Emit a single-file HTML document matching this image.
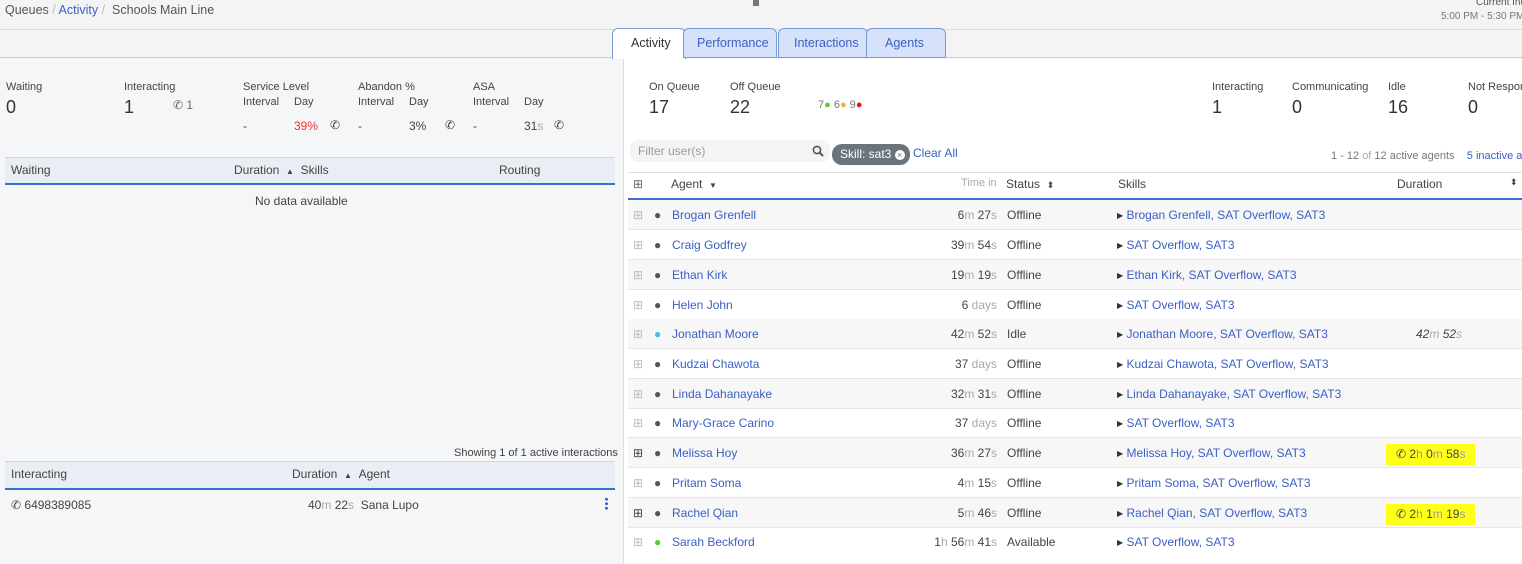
<!DOCTYPE html>
<html><head><meta charset="utf-8"><style>
*{margin:0;padding:0;box-sizing:border-box}
body{width:1522px;height:564px;overflow:hidden;font-family:"Liberation Sans",sans-serif;font-size:12px;color:#444;background:#f5f6f8;position:relative}
.a{position:absolute;white-space:nowrap}
.blue{color:#3b5fc4}
.g{color:#aaa}
.lbl{font-size:11px;color:#444}
.big{font-size:18px;color:#333}
.row{position:absolute;left:628px;width:894px;height:30px;border-bottom:1px solid #e6e6e6}
.row>span{position:absolute;top:8px;white-space:nowrap}
.tri{color:#333;font-size:8px;vertical-align:1px}
</style></head><body>
<div class="a" style="left:0;top:0;width:1522px;height:30px;background:#f4f4f4"></div>
<div class="a" style="left:5px;top:3px;font-size:12.5px;color:#555">Queues <span style="color:#bbb">/</span> <span class="blue">Activity</span> <span style="color:#bbb">/</span> &nbsp;Schools Main Line</div>
<div class="a" style="left:753px;top:0;width:6px;height:6px;background:#777"></div>
<div class="a" style="left:1476px;top:-3px;font-size:10px;color:#555">Current Interval</div>
<div class="a" style="left:1441px;top:11px;font-size:10px;color:#777">5:00 PM - 5:30 PM</div>
<div class="a" style="left:0;top:29px;width:1522px;height:29px;background:#f4f4f4;border-top:1px solid #ddd;border-bottom:1px solid #ccd"></div>
<div class="a" style="left:612px;top:28px;width:74px;height:31px;background:#fff;border:1px solid #7a9ad8;border-bottom:none;border-radius:6px 6px 0 0"></div>
<div class="a" style="left:683px;top:28px;width:94px;height:30px;background:#d6e2fa;border:1px solid #7a9ad8;border-radius:6px 6px 0 0"></div>
<div class="a" style="left:778px;top:28px;width:90px;height:30px;background:#d6e2fa;border:1px solid #7a9ad8;border-radius:6px 6px 0 0"></div>
<div class="a" style="left:866px;top:28px;width:80px;height:30px;background:#d6e2fa;border:1px solid #7a9ad8;border-radius:6px 6px 0 0"></div>
<div class="a" style="left:631px;top:36px;font-size:12.5px;color:#333">Activity</div>
<div class="a blue" style="left:697px;top:36px;font-size:12.5px">Performance</div>
<div class="a blue" style="left:794px;top:36px;font-size:12.5px">Interactions</div>
<div class="a blue" style="left:885px;top:36px;font-size:12.5px">Agents</div>

<div class="a lbl" style="left:6px;top:81px">Waiting</div><div class="a big" style="left:6px;top:97px">0</div>
<div class="a lbl" style="left:124px;top:81px">Interacting</div><div class="a big" style="left:124px;top:97px">1</div>
<div class="a" style="left:173px;top:98px;color:#666">&#x2706; 1</div>
<div class="a lbl" style="left:243px;top:81px">Service Level</div>
<div class="a lbl" style="left:243px;top:96px">Interval</div><div class="a lbl" style="left:294px;top:96px">Day</div>
<div class="a" style="left:243px;top:119px">-</div><div class="a" style="left:294px;top:119px;color:#e33">39%</div><div class="a" style="left:330px;top:118px">&#x2706;</div>
<div class="a lbl" style="left:358px;top:81px">Abandon %</div>
<div class="a lbl" style="left:358px;top:96px">Interval</div><div class="a lbl" style="left:409px;top:96px">Day</div>
<div class="a" style="left:358px;top:119px">-</div><div class="a" style="left:409px;top:119px">3%</div><div class="a" style="left:445px;top:118px">&#x2706;</div>
<div class="a lbl" style="left:473px;top:81px">ASA</div>
<div class="a lbl" style="left:473px;top:96px">Interval</div><div class="a lbl" style="left:524px;top:96px">Day</div>
<div class="a" style="left:473px;top:119px">-</div><div class="a" style="left:524px;top:119px">31<span class="g">s</span></div><div class="a" style="left:554px;top:118px">&#x2706;</div>

<div class="a" style="left:5px;top:157px;width:610px;height:28px;background:#e9edf4;border-top:1px solid #d0d6df;border-bottom:2px solid #3a6fd0"></div>
<div class="a" style="left:11px;top:163px">Waiting</div>
<div class="a" style="left:234px;top:163px">Duration &nbsp;<span style="font-size:8px">&#9650;</span> &nbsp;Skills</div>
<div class="a" style="left:499px;top:163px">Routing</div>
<div class="a" style="left:255px;top:194px">No data available</div>

<div class="a" style="left:454px;top:447px;font-size:11px">Showing 1 of 1 active interactions</div>
<div class="a" style="left:5px;top:461px;width:610px;height:29px;background:#e9edf4;border-top:1px solid #d0d6df;border-bottom:2px solid #3a6fd0"></div>
<div class="a" style="left:11px;top:467px">Interacting</div>
<div class="a" style="left:292px;top:467px">Duration &nbsp;<span style="font-size:8px">&#9650;</span> &nbsp;Agent</div>
<div class="a" style="left:11px;top:498px">&#x2706; 6498389085</div>
<div class="a" style="left:308px;top:498px">40<span class="g">m</span> 22<span class="g">s</span> &nbsp;Sana Lupo</div>
<div class="a" style="left:605px;top:497px;width:3px;height:13px;background:radial-gradient(circle,#3b5fc4 1.4px,transparent 1.6px) 0 0/3px 4.5px"></div>

<div class="a" style="left:623px;top:59px;width:899px;height:505px;background:#fff;border-left:1px solid #dde"></div>
<div class="a lbl" style="left:649px;top:81px">On Queue</div><div class="a big" style="left:649px;top:97px">17</div>
<div class="a lbl" style="left:730px;top:81px">Off Queue</div><div class="a big" style="left:730px;top:97px">22</div>
<div class="a" style="left:818px;top:99px;font-size:11px;color:#777">7<span style="color:#5c3">&#9679;</span> 6<span style="color:#fa3">&#9679;</span> 9<span style="color:#e11">&#9679;</span></div>
<div class="a lbl" style="left:1212px;top:81px">Interacting</div><div class="a big" style="left:1212px;top:97px">1</div>
<div class="a lbl" style="left:1292px;top:81px">Communicating</div><div class="a big" style="left:1292px;top:97px">0</div>
<div class="a lbl" style="left:1388px;top:81px">Idle</div><div class="a big" style="left:1388px;top:97px">16</div>
<div class="a lbl" style="left:1468px;top:81px">Not Responding</div><div class="a big" style="left:1468px;top:97px">0</div>

<div class="a" style="left:630px;top:140px;width:200px;height:22px;background:#f4f4f4;border-radius:8px"></div>
<div class="a" style="left:638px;top:144px;color:#999">Filter user(s)</div>
<svg class="a" style="left:812px;top:145px" width="12" height="12" viewBox="0 0 12 12"><circle cx="5" cy="5" r="3.6" fill="none" stroke="#555" stroke-width="1.6"/><line x1="7.6" y1="7.6" x2="11" y2="11" stroke="#555" stroke-width="2"/></svg>
<div class="a" style="left:832px;top:144px;width:78px;height:21px;background:#6b737c;border-radius:10px;color:#fff;padding:3px 8px;font-size:12px">Skill: sat3 <span style="display:inline-block;width:10px;height:10px;border-radius:50%;background:#fff;color:#6b737c;font-size:9px;line-height:10px;text-align:center;vertical-align:0">×</span></div>
<div class="a blue" style="left:913px;top:146px">Clear All</div>
<div class="a" style="left:1331px;top:150px;font-size:11px;color:#777">1 - 12 <span class="g">of</span> 12 active agents &nbsp; &nbsp;<span class="blue">5 inactive agents</span></div>

<div class="a" style="left:628px;top:172px;width:894px;height:28px;background:#fff;border-top:1px solid #ddd;border-bottom:2px solid #3a6fd0"></div>
<div class="a" style="left:633px;top:177px;color:#666">&#x229E;</div>
<div class="a" style="left:671px;top:177px">Agent &nbsp;<span style="font-size:8px">&#9660;</span></div>
<div class="a g" style="left:961px;top:177px;font-size:11px">Time in</div>
<div class="a" style="left:1006px;top:177px">Status &nbsp;<span style="font-size:9px">&#x2B0D;</span></div>
<div class="a" style="left:1118px;top:177px">Skills</div>
<div class="a" style="left:1397px;top:177px">Duration</div>
<div class="a" style="left:1510px;top:177px;font-size:9px">&#x2B0D;</div>

<div class="row" style="top:200px;background:#f7f7f7"><span style="left:5px;color:#bbb">&#x229E;</span><span style="left:26px;color:#555">&#9679;</span><span class="blue" style="left:44px">Brogan Grenfell</span><span style="right:525px">6<span class="g">m</span> 27<span class="g">s</span></span><span style="left:379px">Offline</span><span class="blue" style="left:489px"><span class="tri">&#9654;</span> Brogan Grenfell, SAT Overflow, SAT3</span></div>
<div class="row" style="top:230px"><span style="left:5px;color:#bbb">&#x229E;</span><span style="left:26px;color:#555">&#9679;</span><span class="blue" style="left:44px">Craig Godfrey</span><span style="right:525px">39<span class="g">m</span> 54<span class="g">s</span></span><span style="left:379px">Offline</span><span class="blue" style="left:489px"><span class="tri">&#9654;</span> SAT Overflow, SAT3</span></div>
<div class="row" style="top:260px;background:#f7f7f7"><span style="left:5px;color:#bbb">&#x229E;</span><span style="left:26px;color:#555">&#9679;</span><span class="blue" style="left:44px">Ethan Kirk</span><span style="right:525px">19<span class="g">m</span> 19<span class="g">s</span></span><span style="left:379px">Offline</span><span class="blue" style="left:489px"><span class="tri">&#9654;</span> Ethan Kirk, SAT Overflow, SAT3</span></div>
<div class="row" style="top:290px"><span style="left:5px;color:#bbb">&#x229E;</span><span style="left:26px;color:#555">&#9679;</span><span class="blue" style="left:44px">Helen John</span><span style="right:525px">6 <span class="g">days</span></span><span style="left:379px">Offline</span><span class="blue" style="left:489px"><span class="tri">&#9654;</span> SAT Overflow, SAT3</span></div>
<div class="row" style="top:319px;background:#f7f7f7"><span style="left:5px;color:#bbb">&#x229E;</span><span style="left:26px;color:#3bc0e8">&#9679;</span><span class="blue" style="left:44px">Jonathan Moore</span><span style="right:525px">42<span class="g">m</span> 52<span class="g">s</span></span><span style="left:379px">Idle</span><span class="blue" style="left:489px"><span class="tri">&#9654;</span> Jonathan Moore, SAT Overflow, SAT3</span><span style="left:788px;font-style:italic">42<span class="g">m</span> 52<span class="g">s</span></span></div>
<div class="row" style="top:349px"><span style="left:5px;color:#bbb">&#x229E;</span><span style="left:26px;color:#555">&#9679;</span><span class="blue" style="left:44px">Kudzai Chawota</span><span style="right:525px">37 <span class="g">days</span></span><span style="left:379px">Offline</span><span class="blue" style="left:489px"><span class="tri">&#9654;</span> Kudzai Chawota, SAT Overflow, SAT3</span></div>
<div class="row" style="top:379px;background:#f7f7f7"><span style="left:5px;color:#bbb">&#x229E;</span><span style="left:26px;color:#555">&#9679;</span><span class="blue" style="left:44px">Linda Dahanayake</span><span style="right:525px">32<span class="g">m</span> 31<span class="g">s</span></span><span style="left:379px">Offline</span><span class="blue" style="left:489px"><span class="tri">&#9654;</span> Linda Dahanayake, SAT Overflow, SAT3</span></div>
<div class="row" style="top:408px"><span style="left:5px;color:#bbb">&#x229E;</span><span style="left:26px;color:#555">&#9679;</span><span class="blue" style="left:44px">Mary-Grace Carino</span><span style="right:525px">37 <span class="g">days</span></span><span style="left:379px">Offline</span><span class="blue" style="left:489px"><span class="tri">&#9654;</span> SAT Overflow, SAT3</span></div>
<div class="row" style="top:438px;background:#f7f7f7"><span style="left:5px;color:#444">&#x229E;</span><span style="left:26px;color:#555">&#9679;</span><span class="blue" style="left:44px">Melissa Hoy</span><span style="right:525px">36<span class="g">m</span> 27<span class="g">s</span></span><span style="left:379px">Offline</span><span class="blue" style="left:489px"><span class="tri">&#9654;</span> Melissa Hoy, SAT Overflow, SAT3</span><span style="left:758px;top:6px;background:#ffff1a;padding:3px 10px 4px 10px">&#x2706; 2<span style="color:#999">h</span> 0<span style="color:#999">m</span> 58<span style="color:#999">s</span></span></div>
<div class="row" style="top:468px"><span style="left:5px;color:#bbb">&#x229E;</span><span style="left:26px;color:#555">&#9679;</span><span class="blue" style="left:44px">Pritam Soma</span><span style="right:525px">4<span class="g">m</span> 15<span class="g">s</span></span><span style="left:379px">Offline</span><span class="blue" style="left:489px"><span class="tri">&#9654;</span> Pritam Soma, SAT Overflow, SAT3</span></div>
<div class="row" style="top:498px;background:#f7f7f7"><span style="left:5px;color:#444">&#x229E;</span><span style="left:26px;color:#555">&#9679;</span><span class="blue" style="left:44px">Rachel Qian</span><span style="right:525px">5<span class="g">m</span> 46<span class="g">s</span></span><span style="left:379px">Offline</span><span class="blue" style="left:489px"><span class="tri">&#9654;</span> Rachel Qian, SAT Overflow, SAT3</span><span style="left:758px;top:6px;background:#ffff1a;padding:3px 10px 4px 10px">&#x2706; 2<span style="color:#999">h</span> 1<span style="color:#999">m</span> 19<span style="color:#999">s</span></span></div>
<div class="row" style="top:527px;border:none"><span style="left:5px;color:#bbb">&#x229E;</span><span style="left:26px;color:#5c3">&#9679;</span><span class="blue" style="left:44px">Sarah Beckford</span><span style="right:525px">1<span class="g">h</span> 56<span class="g">m</span> 41<span class="g">s</span></span><span style="left:379px">Available</span><span class="blue" style="left:489px"><span class="tri">&#9654;</span> SAT Overflow, SAT3</span></div>
</body></html>
